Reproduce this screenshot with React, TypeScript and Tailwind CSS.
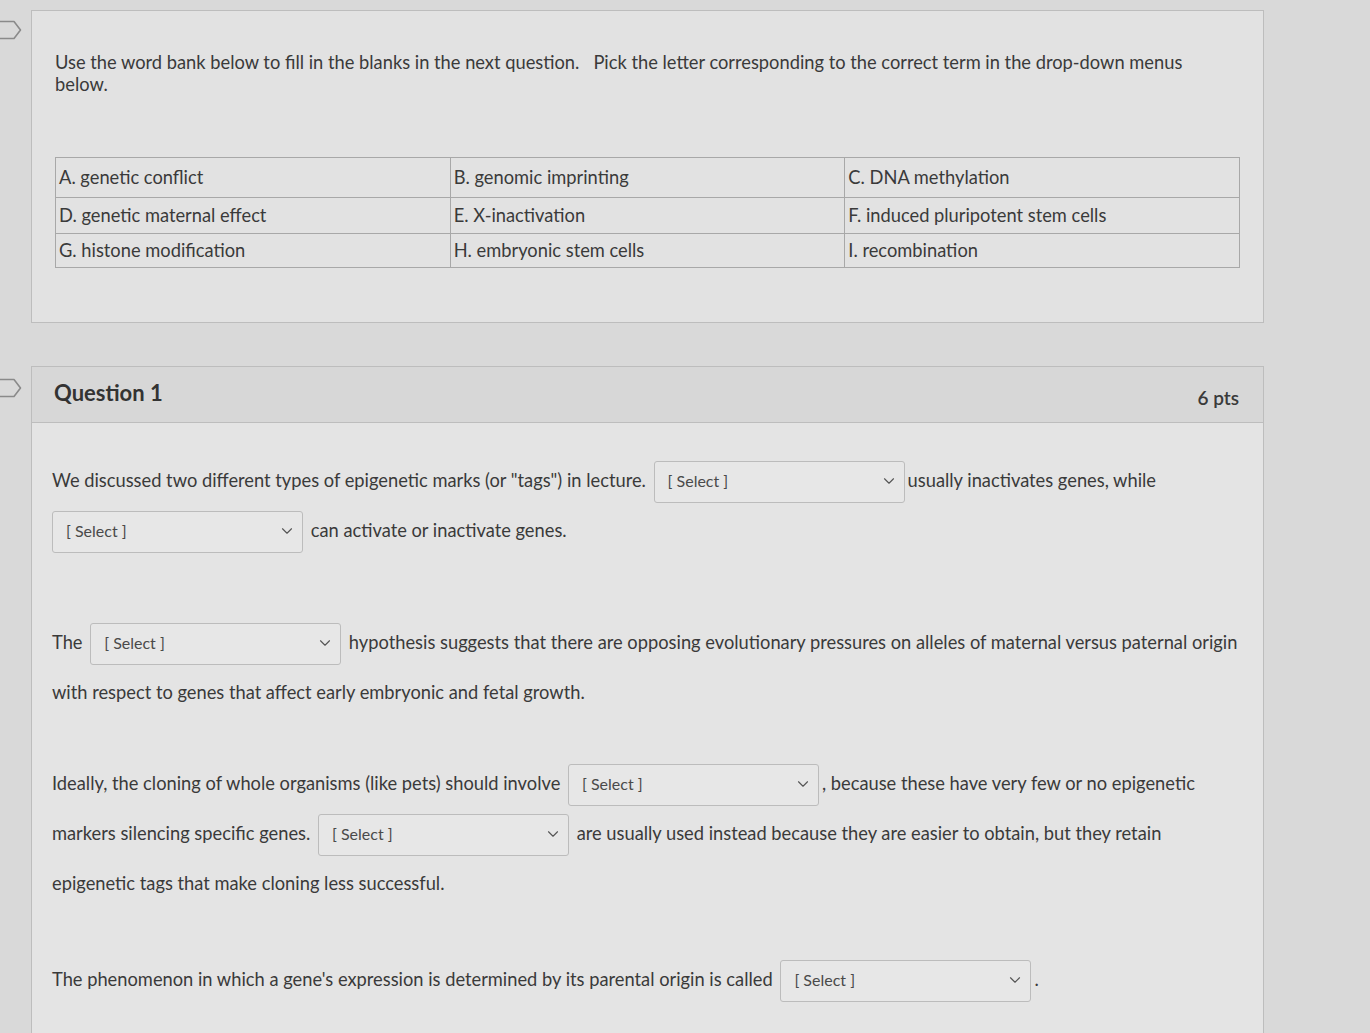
import { ChevronDown } from "lucide-react";

const bank = [
  ["A. genetic conflict", "B. genomic imprinting", "C. DNA methylation"],
  ["D. genetic maternal effect", "E. X-inactivation", "F. induced pluripotent stem cells"],
  ["G. histone modification", "H. embryonic stem cells", "I. recombination"],
];

const rowHeights = ["h-[40px]", "h-[36px]", "h-[34px]"];

function Marker() {
  return (
    <svg width="22" height="20" viewBox="0 0 22 20" fill="none">
      <path
        d="M0 1.5 H14 L20.5 10 L14 18.5 H0"
        stroke="#8a8a8a"
        strokeWidth="1.6"
        strokeLinejoin="round"
      />
    </svg>
  );
}

function Dropdown({ first }: { first?: boolean }) {
  return (
    <span
      className={
        (first ? "mr-[3px] " : "mx-[3px] ") +
        "inline-flex h-[42px] w-[251px] items-center justify-between rounded-[3px] border border-[#bcbcbc] bg-[#e7e7e7] pl-[13px] pr-[6px] align-middle text-[16px] leading-none text-[#4a4a4a]"
      }
    >
      <span className="-mt-[3px]">[ Select ]</span>
      <ChevronDown size={18} strokeWidth={1.5} className="-mt-[3px] text-[#555]" />
    </span>
  );
}

export default function App() {
  return (
    <div
      className="min-h-screen bg-[#d9d9d9] pt-[10px] text-[#3a3a3a]"
      style={{ fontFamily: "Lato, 'Open Sans', sans-serif" }}
    >
      {/* word bank block */}
      <div className="flex">
        <div className="w-[31px] shrink-0 pt-[10px]">
          <Marker />
        </div>
        <div className="w-[1233px] border border-[#bdbdbd] bg-[#e2e2e2] px-[23px] pb-[54px] pt-[40px]">
          <p className="text-[18.3px] leading-[22px]">
            Use the word bank below to fill in the blanks in the next question.&nbsp;&nbsp; Pick the
            letter corresponding to the correct term in the drop-down menus
            <br />
            below.
          </p>
          <table className="mt-[62px] w-full border-collapse text-[18.3px]">
            <tbody>
              {bank.map((row, i) => (
                <tr key={i} className={rowHeights[i]}>
                  {row.map((cell) => (
                    <td key={cell} className="w-1/3 border border-[#a8a8a8] px-[3px] align-middle">
                      {cell}
                    </td>
                  ))}
                </tr>
              ))}
            </tbody>
          </table>
        </div>
      </div>

      {/* question 1 */}
      <div className="mt-[43px] flex">
        <div className="w-[31px] shrink-0 pt-[12px]">
          <Marker />
        </div>
        <div className="w-[1233px] border border-[#bdbdbd] bg-[#e4e4e4]">
          <div className="flex h-[56px] items-center justify-between border-b border-[#bdbdbd] bg-[#d7d7d7] pl-[22px] pr-[24px]">
            <h2 className="-mt-[4px] text-[22px] font-bold text-[#333]">Question 1</h2>
            <span className="mt-[8px] text-[19px] font-semibold text-[#3a3a3a]">6 pts</span>
          </div>
          <div className="whitespace-nowrap pb-[80px] pl-[20px] pr-[20px] pt-[32px] text-[18.3px] leading-[50px]">
            <p>
              We discussed two different types of epigenetic marks (or "tags") in lecture. <Dropdown />
              usually inactivates genes, while
              <br />
              <Dropdown first /> can activate or inactivate genes.
            </p>
            <p className="mt-[62px]">
              The <Dropdown /> hypothesis suggests that there are opposing evolutionary pressures on
              alleles of maternal versus paternal origin
              <br />
              with respect to genes that affect early embryonic and fetal growth.
            </p>
            <p className="mt-[41px]">
              Ideally, the cloning of whole organisms (like pets) should involve <Dropdown />, because
              these have very few or no epigenetic
              <br />
              markers silencing specific genes. <Dropdown /> are usually used instead because they are
              easier to obtain, but they retain
              <br />
              epigenetic tags that make cloning less successful.
            </p>
            <p className="mt-[46px]">
              The phenomenon in which a gene's expression is determined by its parental origin is
              called <Dropdown />.
            </p>
          </div>
        </div>
      </div>
    </div>
  );
}
